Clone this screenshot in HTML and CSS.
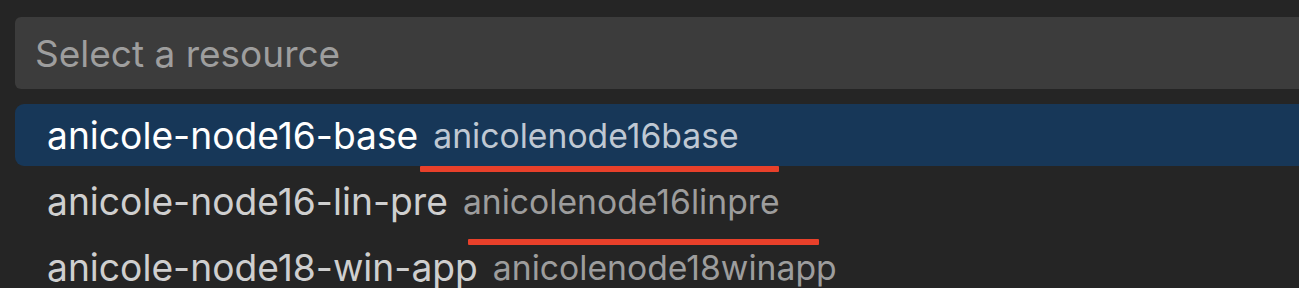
FILE: index.html
```html
<!DOCTYPE html>
<html>
<head>
<meta charset="utf-8">
<link rel="stylesheet" href="styles.css">
</head>
<body>
<div class="picker">
  <div class="input">Select a resource</div>
  <div class="list">
    <div class="row selected">
      <span class="label">anicole-node16-base</span>
      <span class="desc">anicolenode16base</span>
    </div>
    <div class="row">
      <span class="label">anicole-node16-lin-pre</span>
      <span class="desc">anicolenode16linpre</span>
    </div>
    <div class="row">
      <span class="label">anicole-node18-win-app</span>
      <span class="desc">anicolenode18winapp</span>
    </div>
  </div>
  <div class="mark mark-1"></div>
  <div class="mark mark-2"></div>
</div>
</body>
</html>
```

FILE: styles.css
```css
html, body {
  margin: 0;
  padding: 0;
  background: #252525;
  overflow: hidden;
}
body {
  width: 1299px;
  height: 288px;
  font-family: Inter, "Liberation Sans", sans-serif;
}
.picker {
  position: relative;
  padding: 17px 0 0 15px;
}
.input {
  height: 72px;
  background: #3c3c3c;
  border-radius: 6px 0 0 6px;
  box-sizing: border-box;
  padding-left: 20px;
  display: flex;
  align-items: center;
  font-size: 37px;
  color: #9e9e9e;
}
.list {
  margin-top: 15px;
  display: flex;
  flex-direction: column;
  gap: 4px;
}
.row {
  height: 62px;
  display: flex;
  align-items: center;
  padding-left: 32px;
  border-radius: 9px 0 0 9px;
  white-space: nowrap;
}
.row.selected {
  background: #173758;
}
.label {
  font-size: 37.2px;
  color: #cfcfcf;
}
.selected .label {
  color: #ffffff;
}
.desc {
  font-size: 33.7px;
  color: #9d9d9d;
  margin-left: 15px;
}
.selected .desc {
  color: #bfc8d3;
}
.mark {
  position: absolute;
  height: 6px;
  background: #e8402a;
  border-radius: 1px;
}
.mark-1 {
  left: 420px;
  width: 359px;
  top: 166px;
}
.mark-2 {
  left: 468px;
  width: 351px;
  top: 239px;
}
```
